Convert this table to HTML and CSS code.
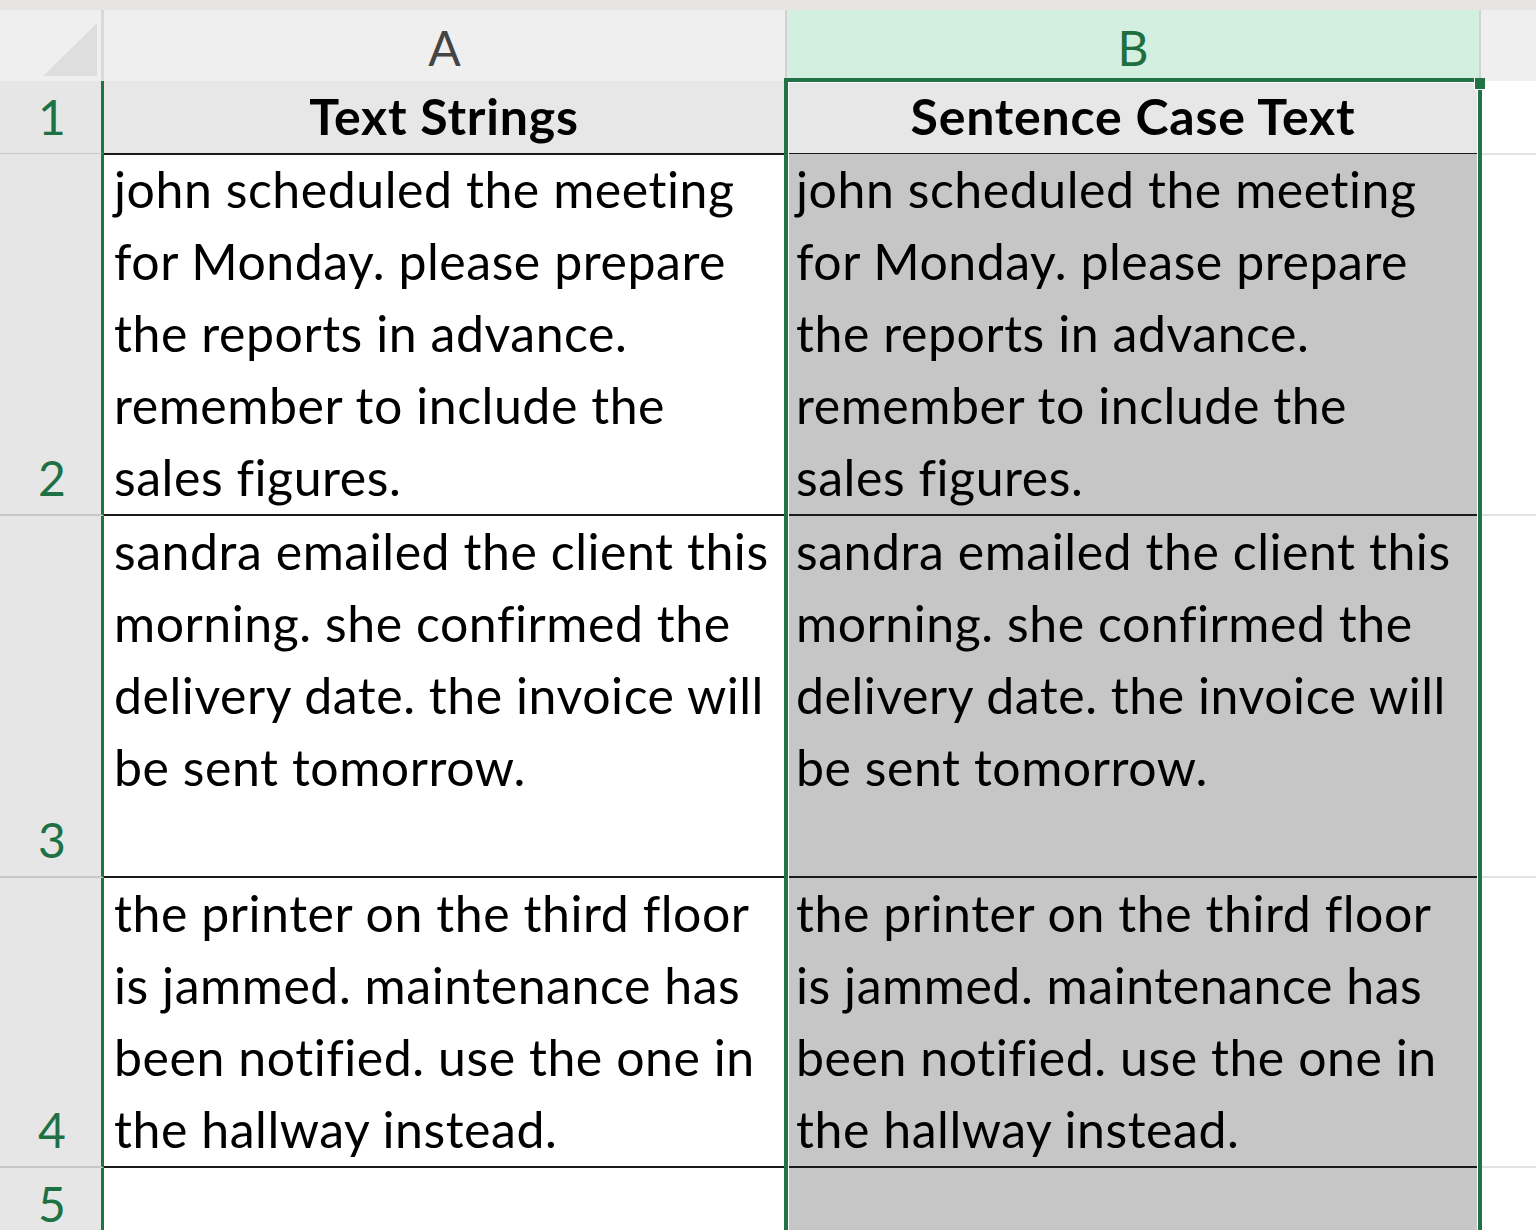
FILE: index.html
```html
<!DOCTYPE html>
<html lang="en">
<head>
<meta charset="utf-8">
<title>Sentence Case Text</title>
<link rel="stylesheet" href="styles.css">
</head>
<body>
<div class="topbar"></div>
<div class="colheads">
  <div class="corner"><div class="tri"></div></div>
  <div class="ch ch-a">A</div>
  <div class="ch ch-b">B</div>
  <div class="ch ch-c"></div>
</div>
<div class="row r1">
  <div class="rh">1</div>
  <div class="cell a hdr">Text Strings</div>
  <div class="cell b hdr">Sentence Case Text</div>
  <div class="cell c"></div>
</div>
<div class="row r2">
  <div class="rh">2</div>
  <div class="cell a"><div class="txt">john scheduled the meeting<br>for Monday. please prepare<br>the reports in advance.<br>remember to include the<br>sales figures.</div></div>
  <div class="cell b"><div class="txt">john scheduled the meeting<br>for Monday. please prepare<br>the reports in advance.<br>remember to include the<br>sales figures.</div></div>
  <div class="cell c"></div>
</div>
<div class="row r3">
  <div class="rh">3</div>
  <div class="cell a"><div class="txt">sandra emailed the client this<br>morning. she confirmed the<br>delivery date. the invoice will<br>be sent tomorrow.</div></div>
  <div class="cell b"><div class="txt">sandra emailed the client this<br>morning. she confirmed the<br>delivery date. the invoice will<br>be sent tomorrow.</div></div>
  <div class="cell c"></div>
</div>
<div class="row r4">
  <div class="rh">4</div>
  <div class="cell a"><div class="txt">the printer on the third floor<br>is jammed. maintenance has<br>been notified. use the one in<br>the hallway instead.</div></div>
  <div class="cell b"><div class="txt">the printer on the third floor<br>is jammed. maintenance has<br>been notified. use the one in<br>the hallway instead.</div></div>
  <div class="cell c"></div>
</div>
<div class="row r5">
  <div class="rh">5</div>
  <div class="cell a"></div>
  <div class="cell b"></div>
  <div class="cell c"></div>
</div>
<div class="selection"><div class="handle"></div></div>
</body>
</html>
```
FILE: styles.css
```css
* { box-sizing: border-box; }
html, body { margin: 0; padding: 0; }
body {
  background: #ffffff;
  font-family: Lato, "Noto Sans", sans-serif;
  color: #000;
  height: 1230px;
  overflow: hidden;
  position: relative;
}
.topbar { height: 10px; background: #e8e4e4; }
.colheads {
  display: grid;
  grid-template-columns: 104px 683px 694px 1fr;
  height: 71px;
  border-bottom: 2px solid #c4c4c4;
}
.corner {
  background: #efefef;
  border-right: 3px solid #dadada;
  display: flex;
  justify-content: flex-end;
  align-items: flex-end;
  padding: 0 4px 6px 0;
}
.tri {
  width: 54px;
  height: 53px;
  background: #dedede;
  clip-path: polygon(100% 0, 100% 100%, 0 100%);
}
.ch {
  background: #efefef;
  border-right: 2px solid #d2d2d2;
  font-size: 48px;
  line-height: 69px;
  padding-top: 3px;
  text-align: center;
  color: #444;
}
.ch-b { background: #d3efe0; color: #1e6e42; }
.ch-c { border-right: none; }

.row {
  display: grid;
  grid-template-columns: 104px 680px 698px 1fr;
}
.r1 { height: 73px; }
.r2 { height: 362px; }
.r3 { height: 362px; }
.r4 { height: 290px; }
.r5 { height: 74px; }

.rh {
  background: #e6e6e6;
  border-right: 3px solid #217346;
  border-bottom: 2px solid #c8c8c8;
  color: #1e7145;
  font-size: 48px;
  line-height: 72px;
  display: flex;
  justify-content: center;
  align-items: flex-end;
  padding-left: 3px;
}
.cell {
  font-size: 50px;
  letter-spacing: 0.55px;
  line-height: 72px;
  white-space: nowrap;
  border-bottom: 2px solid #1a1a1a;
}
.txt { margin-top: -1px; }
.cell.a { padding-left: 10px; }
.cell.b { padding-left: 12px; background: #c6c6c6; }
.cell.c { border-bottom: 2px solid #e2e2e2; }
.r1 .cell.a, .r1 .cell.b { background: #e7e7e7; }
.r1 .cell.c { background: #fff; }
.cell.hdr {
  font-weight: 700;
  letter-spacing: 0.8px;
  text-align: center;
  line-height: 71px;
  padding-left: 0;
}

.selection {
  position: absolute;
  left: 784px;
  top: 78px;
  width: 698px;
  bottom: -20px;
  border: 4px solid #217346;
  box-shadow: inset 0 0 0 1px #ffffff;
}
.handle {
  position: absolute;
  left: 686px;
  top: -4px;
  width: 11px;
  height: 12px;
  background: #217346;
  border-left: 1px solid #fff;
  border-bottom: 1px solid #fff;
}
```
